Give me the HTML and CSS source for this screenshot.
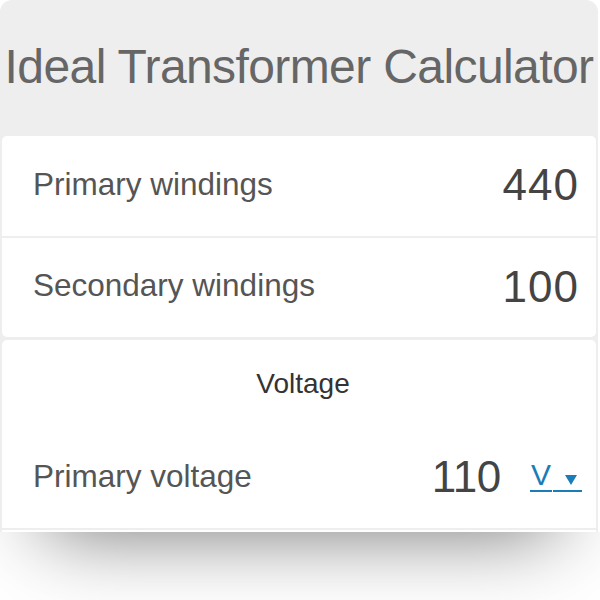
FILE: index.html
```html
<!DOCTYPE html>
<html lang="en">
<head>
<meta charset="utf-8">
<title>Ideal Transformer Calculator</title>
<link rel="stylesheet" href="styles.css">
</head>
<body>
<div class="calc">
  <header class="calc-head">
    <h1 class="calc-title">Ideal Transformer Calculator</h1>
  </header>
  <section class="card">
    <div class="row">
      <span class="label">Primary windings</span>
      <span class="value">440</span>
    </div>
    <div class="row">
      <span class="label">Secondary windings</span>
      <span class="value">100</span>
    </div>
  </section>
  <section class="card card-last">
    <div class="group-title">Voltage</div>
    <div class="row row-unit">
      <span class="label">Primary voltage</span>
      <span class="value value-tight">110</span>
      <span class="unit"><span class="unit-name">V</span><span class="unit-caret"><span class="caret"></span></span></span>
    </div>
    <div class="row row-stub"></div>
  </section>
</div>
<div class="fade"></div>
</body>
</html>
```
FILE: styles.css
```css
html, body {
  margin: 0;
  padding: 0;
  background: #fff;
}
body {
  width: 600px;
  height: 600px;
  overflow: hidden;
  position: relative;
  font-family: "Liberation Sans", Arial, Helvetica, sans-serif;
}
.calc {
  width: 594px;
  padding: 0 2px;
  background: #eeeeee;
  border-radius: 12px 12px 0 0;
}
.calc-head {
  height: 136px;
  display: flex;
  align-items: center;
  justify-content: center;
}
.calc-title {
  margin: 0;
  font-weight: normal;
  font-size: 48px;
  letter-spacing: -0.6px;
  color: #666;
  white-space: nowrap;
  line-height: 1;
  padding-bottom: 2px;
}
.card {
  background: #fff;
  border-radius: 5px;
  margin-bottom: 3px;
}
.card-last {
  margin-bottom: 0;
  border-radius: 5px 5px 0 0;
}
.row {
  height: 100px;
  display: flex;
  align-items: center;
  padding: 0 17px 0 31px;
}
.row + .row {
  border-top: 2px solid #eeeeee;
  height: 99px;
}
.label {
  flex: 1;
  font-size: 31.5px;
  color: #555;
  padding-bottom: 4px;
}
.value {
  font-size: 44px;
  letter-spacing: 1px;
  color: #444;
  padding-bottom: 2px;
}
.value-tight {
  letter-spacing: -0.3px;
}
.group-title {
  height: 88px;
  display: flex;
  align-items: center;
  justify-content: center;
  font-size: 28px;
  color: #333;
  padding-left: 8px;
}
.row-unit {
  height: 100px;
  padding-right: 14px;
}
.row-unit .value {
  margin-right: 29px;
}
.row.row-stub {
  height: 68px;
}
.unit {
  display: flex;
  align-items: flex-end;
  color: #1b7db8;
  font-size: 30px;
  line-height: 1;
  margin-bottom: 4px;
}
.unit-name {
  border-bottom: 2px solid #1b7db8;
  padding: 0 1px;
}
.unit-caret {
  margin-left: 1px;
  width: 29px;
  height: 27px;
  border-bottom: 2px solid #1b7db8;
  display: flex;
  align-items: center;
  justify-content: flex-end;
  padding-right: 5px;
  box-sizing: border-box;
}
.caret {
  width: 0;
  height: 0;
  border-left: 6px solid transparent;
  border-right: 6px solid transparent;
  border-top: 10px solid #1b7db8;
  margin-top: 4px;
}
.fade {
  position: absolute;
  top: 532px;
  left: 0;
  width: 600px;
  height: 68px;
  background: #fff;
  overflow: hidden;
}
.fade::before {
  content: "";
  position: absolute;
  top: -100px;
  left: 44px;
  right: 44px;
  height: 100px;
  box-shadow: 0 0 82px rgba(0, 0, 0, 0.56);
}
```
